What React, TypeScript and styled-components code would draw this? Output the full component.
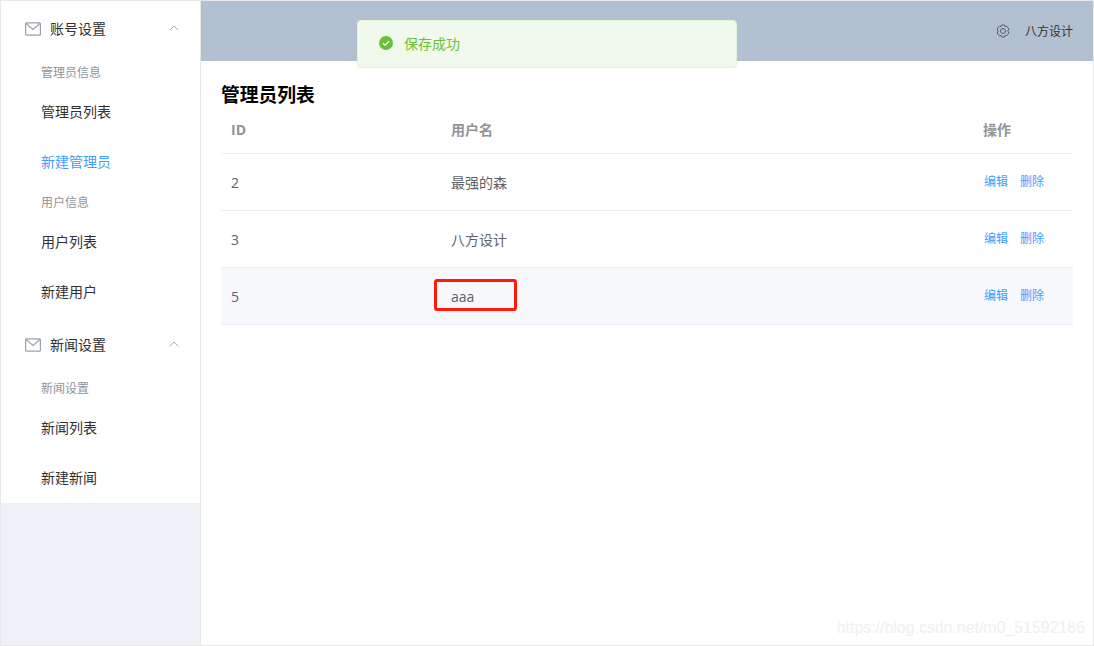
import React from "react";
import styled, { createGlobalStyle } from "styled-components";

const Global = createGlobalStyle`
  html, body { margin: 0; padding: 0; background: #fff; }
  body { font-family: "Open Sans", "Noto Sans CJK SC", sans-serif; }
  * { box-sizing: border-box; }
`;

const Frame = styled.div`
  position: relative;
  width: 1094px;
  height: 646px;
  border: 1px solid #e8e8e8;
  display: flex;
  overflow: hidden;
`;
const Sidebar = styled.aside`
  width: 200px;
  flex: none;
  background: #eef1f6;
  border-right: 1px solid #e6e6e6;
`;
const Menu = styled.nav`
  background: #fff;
`;
const SubTitle = styled.div`
  height: 56px;
  display: flex;
  align-items: center;
  padding: 0 21px 2px 24px;
  font-size: 14px;
  color: #303133;
`;
const TitleText = styled.span`
  margin-left: 9px;
  flex: 1;
`;
const GroupTitle = styled.div`
  height: 30px;
  line-height: 32px;
  padding-left: 40px;
  font-size: 12px;
  color: #909399;
`;
const Item = styled.div<{ $active?: boolean }>`
  height: 50px;
  line-height: 50px;
  padding-left: 40px;
  font-size: 14px;
  color: ${(p) => (p.$active ? "#409eff" : "#303133")};
`;
const Main = styled.div`
  flex: 1;
  display: flex;
  flex-direction: column;
  min-width: 0;
`;
const Header = styled.header`
  height: 60px;
  flex: none;
  background: #b3c0d1;
  display: flex;
  align-items: center;
  justify-content: flex-end;
  padding-right: 20px;
  font-size: 12px;
  color: #333;
`;
const UserName = styled.span`
  margin-left: 15px;
`;
const Content = styled.main`
  padding: 20px 20px 0;
  flex: 1;
`;
const Heading = styled.h2`
  margin: 0;
  height: 26px;
  line-height: 28px;
  font-size: 18.800px;
  font-weight: 700;
  color: #000;
`;
const Row = styled.div<{ $hover?: boolean; $head?: boolean }>`
  display: grid;
  grid-template-columns: 220px 532px 100px;
  align-items: center;
  height: ${(p) => (p.$head ? "47px" : "57px")};
  padding-bottom: ${(p) => (p.$head ? "2px" : "0")};
  border-bottom: 1px solid #ebeef5;
  font-size: 14px;
  font-weight: ${(p) => (p.$head ? 700 : 400)};
  color: ${(p) => (p.$head ? "#909399" : "#606266")};
  background: ${(p) => (p.$hover ? "#f7f8fc" : "transparent")};
`;
const Cell = styled.div`
  padding-left: 10px;
`;
const Actions = styled.div`
  padding: 0 0 3px 11px;
  display: flex;
  gap: 12px;
  font-size: 12px;
  color: #409eff;
`;
const Toast = styled.div`
  position: absolute;
  left: 356px;
  top: 19px;
  width: 380px;
  height: 48px;
  display: flex;
  align-items: center;
  gap: 11px;
  padding: 0 0 2px 21px;
  background: #f0f9eb;
  border: 1px solid #e1f3d8;
  border-radius: 4px;
  color: #67c23a;
  font-size: 14px;
`;
const Mark = styled.div`
  position: absolute;
  left: 433px;
  top: 278px;
  width: 83px;
  height: 32px;
  border: 3px solid #ff1a0e;
  border-radius: 3px;
`;
const Watermark = styled.div`
  position: absolute;
  right: 8px;
  bottom: 8px;
  font-family: "Liberation Sans", sans-serif;
  font-size: 15.900px;
  color: #f0f0f0;
  white-space: nowrap;
`;
const MailIcon = styled.svg`
  flex: none;
  margin-top: 2px;
`;

const Mail = () => (
  <MailIcon width="16" height="14" viewBox="0 0 16 14" fill="none" stroke="#9aa0ad" strokeWidth="1.200">
    <rect x="0.600" y="0.800" width="14.800" height="12.400" rx="1" />
    <path d="M1 1.500l7 6L15 1.500" />
  </MailIcon>
);
const Chevron = () => (
  <svg width="10" height="6" viewBox="0 0 10 6" fill="none" stroke="#a6abb5" strokeWidth="1">
    <path d="M.7 5.300L5 1l4.300 4.300" />
  </svg>
);
const Gear = () => (
  <svg width="14" height="14" viewBox="0 0 14 14" fill="none" stroke="#555f6e" strokeWidth="1">
    <path d="M5.500 1h3l.5 1.600 1.600-.4L12.900 5 11.800 7l1.100 2-2.300 2.800-1.600-.4L8.500 13h-3L5 11.400 3.400 11.800 1.100 9 2.200 7 1.100 5 3.400 2.200 5 2.600z" />
    <circle cx="7" cy="7" r="2.500" />
  </svg>
);
const Check = () => (
  <svg width="14" height="14" viewBox="0 0 14 14">
    <circle cx="7" cy="7" r="7" fill="#67c23a" />
    <path d="M4 7.200l2.100 2L10 5.300" fill="none" stroke="#fff" strokeWidth="1.300" />
  </svg>
);

const menus = [
  {
    title: "账号设置",
    groups: [
      { name: "管理员信息", items: ["管理员列表", "新建管理员"] },
      { name: "用户信息", items: ["用户列表", "新建用户"] },
    ],
  },
  { title: "新闻设置", groups: [{ name: "新闻设置", items: ["新闻列表", "新建新闻"] }] },
];

const rows = [
  { id: 2, name: "最强的森" },
  { id: 3, name: "八方设计" },
  { id: 5, name: "aaa", hover: true },
];

export default function App() {
  return (
    <>
      <Global />
      <Frame>
        <Sidebar>
          <Menu>
            {menus.map((m) => (
              <div key={m.title}>
                <SubTitle>
                  <Mail />
                  <TitleText>{m.title}</TitleText>
                  <Chevron />
                </SubTitle>
                {m.groups.map((g) => (
                  <div key={g.name}>
                    <GroupTitle>{g.name}</GroupTitle>
                    {g.items.map((i) => (
                      <Item key={i} $active={i === "新建管理员"}>
                        {i}
                      </Item>
                    ))}
                  </div>
                ))}
              </div>
            ))}
          </Menu>
        </Sidebar>
        <Main>
          <Header>
            <Gear />
            <UserName>八方设计</UserName>
          </Header>
          <Content>
            <Heading>管理员列表</Heading>
            <Row $head>
              <Cell>ID</Cell>
              <Cell>用户名</Cell>
              <Cell>操作</Cell>
            </Row>
            {rows.map((r) => (
              <Row key={r.id} $hover={r.hover}>
                <Cell>{r.id}</Cell>
                <Cell>{r.name}</Cell>
                <Actions>
                  <span>编辑</span>
                  <span>删除</span>
                </Actions>
              </Row>
            ))}
          </Content>
        </Main>
        <Toast>
          <Check />
          <span>保存成功</span>
        </Toast>
        <Mark />
        <Watermark>https://blog.csdn.net/m0_51592186</Watermark>
      </Frame>
    </>
  );
}
